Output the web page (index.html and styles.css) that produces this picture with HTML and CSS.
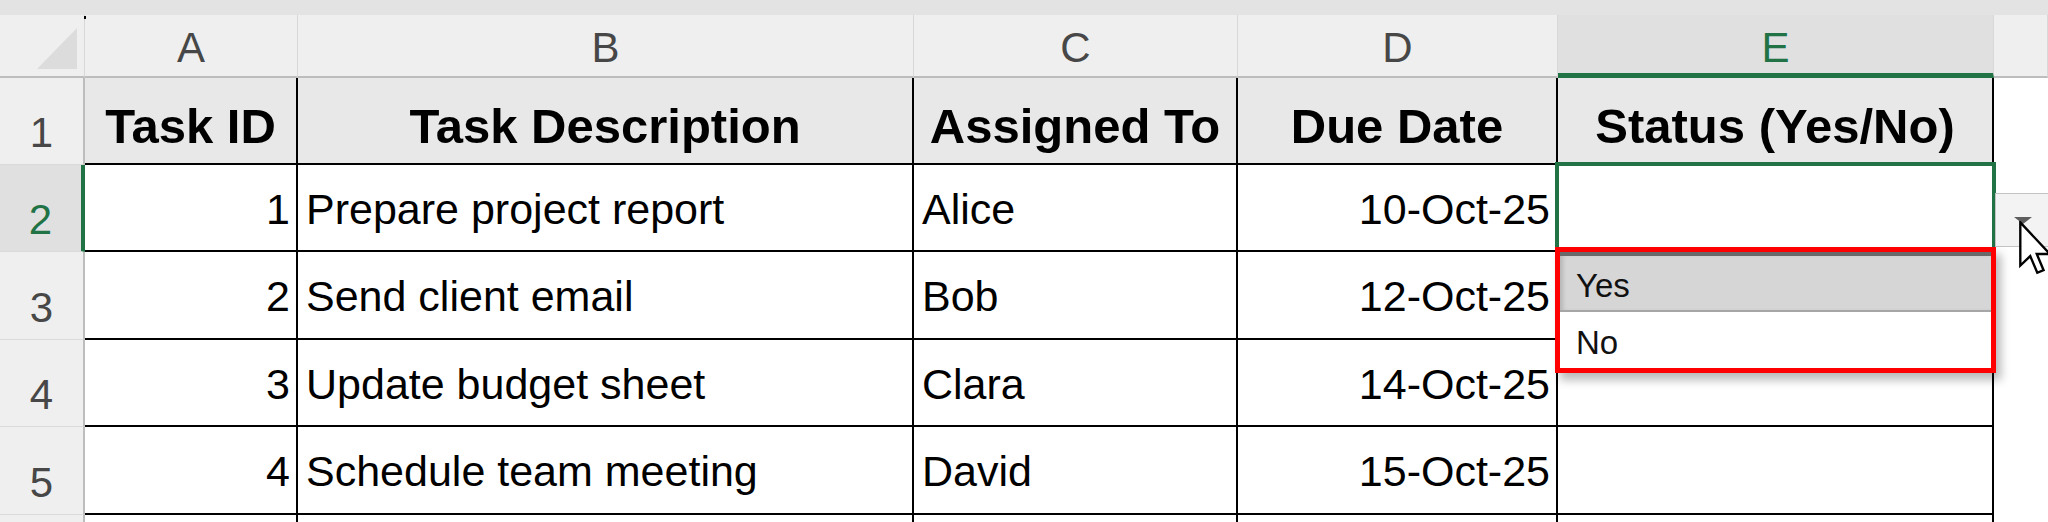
FILE: index.html
```html
<!DOCTYPE html>
<html lang="en">
<head>
  <meta charset="UTF-8" />
  <title>Task Tracker</title>
  <link rel="stylesheet" href="styles.css">
</head>
<body>
  <div class="topbar"></div>

  <div class="sheet">
    <!-- column headers -->
    <div class="corner">
      <svg width="85" height="61" viewBox="0 0 85 61"><polygon points="37,54 77,54 77,13" fill="#dcdcdc"/></svg>
    </div>
    <div class="colhead">A</div>
    <div class="colhead">B</div>
    <div class="colhead">C</div>
    <div class="colhead">D</div>
    <div class="colhead selected">E</div>
    <div class="colhead"></div>

    <!-- row 1 -->
    <div class="rowhead">1</div>
    <div class="cell head">Task ID</div>
    <div class="cell head">Task Description</div>
    <div class="cell head">Assigned To</div>
    <div class="cell head">Due Date</div>
    <div class="cell head">Status (Yes/No)</div>
    <div class="empty"></div>

    <!-- row 2 -->
    <div class="rowhead selected">2</div>
    <div class="cell num">1</div>
    <div class="cell">Prepare project report</div>
    <div class="cell">Alice</div>
    <div class="cell num">10-Oct-25</div>
    <div class="cell active">
      <div class="dd-button"><span class="dd-arrow"></span></div>
      <div class="dd-list">
        <div class="dd-item hover">Yes</div>
        <div class="dd-item">No</div>
      </div>
      <svg class="cursor" width="34" height="55" viewBox="0 0 13 21">
        <path d="M0.5 0.5 L0.5 17 L4.3 13.4 L7 19.8 L9.4 18.8 L6.8 12.6 L11.8 12.6 Z" fill="#fff" stroke="#000" stroke-width="0.9" stroke-linejoin="miter"/>
      </svg>
    </div>
    <div class="empty"></div>

    <!-- row 3 -->
    <div class="rowhead">3</div>
    <div class="cell num">2</div>
    <div class="cell">Send client email</div>
    <div class="cell">Bob</div>
    <div class="cell num">12-Oct-25</div>
    <div class="cell"></div>
    <div class="empty"></div>

    <!-- row 4 -->
    <div class="rowhead">4</div>
    <div class="cell num">3</div>
    <div class="cell">Update budget sheet</div>
    <div class="cell">Clara</div>
    <div class="cell num">14-Oct-25</div>
    <div class="cell"></div>
    <div class="empty"></div>

    <!-- row 5 -->
    <div class="rowhead">5</div>
    <div class="cell num">4</div>
    <div class="cell">Schedule team meeting</div>
    <div class="cell">David</div>
    <div class="cell num">15-Oct-25</div>
    <div class="cell"></div>
    <div class="empty"></div>

    <!-- row 6, only its top edge is visible -->
    <div class="rowhead last"></div>
    <div class="cell last"></div>
    <div class="cell last"></div>
    <div class="cell last"></div>
    <div class="cell last"></div>
    <div class="cell last"></div>
    <div class="empty"></div>
  </div>
</body>
</html>
```

FILE: styles.css
```css
* {
  box-sizing: border-box;
  margin: 0;
  padding: 0;
}

body {
  width: 2048px;
  height: 522px;
  overflow: hidden;
  background-color: #fff;
  font-family: "Liberation Sans", Arial, sans-serif;
  color: #000;
}

.topbar {
  height: 15px;
  background-color: #e3e3e3;
}

.sheet {
  display: grid;
  grid-template-columns: 85px 213px 616px 324px 320px 436px 54px;
  grid-template-rows: 63px 87px 87px 88px 87px 88px 7px;
}

/* headers */
.corner {
  position: relative;
  background-color: #efefef;
  border-bottom: 2px solid #bdbdbd;
  border-right: 1px solid #d8d8d8;
}

.corner svg {
  display: block;
}

.corner::after {
  content: "";
  position: absolute;
  top: 1px;
  right: -2px;
  width: 2px;
  height: 3px;
  background-color: #000;
}

.colhead {
  display: flex;
  justify-content: center;
  align-items: center;
  padding-top: 4px;
  background-color: #efefef;
  border-right: 1px solid #d8d8d8;
  border-bottom: 2px solid #bdbdbd;
  font-size: 42px;
  color: #474747;
}

.colhead.selected {
  background-color: #e0e0e0;
  color: #217346;
  border-bottom: 5px solid #217346;
  padding-top: 7px;
}

.rowhead {
  display: flex;
  justify-content: center;
  align-items: flex-end;
  padding-bottom: 7px;
  background-color: #efefef;
  border-right: 2px solid #bdbdbd;
  border-bottom: 1px solid #dadada;
  font-size: 42px;
  color: #474747;
}

.rowhead.selected {
  background-color: #e0e0e0;
  color: #217346;
  border-right: 4px solid #217346;
}

/* cells */
.cell {
  position: relative;
  display: flex;
  align-items: center;
  padding: 3px 8px 0 8px;
  border-right: 2px solid #000;
  border-bottom: 2px solid #000;
  font-size: 43px;
  white-space: nowrap;
}

.cell.num {
  justify-content: flex-end;
  padding-right: 6px;
}

.cell.head {
  justify-content: center;
  align-items: flex-end;
  padding: 0 0 9px 0;
  background-color: #e8e8e8;
  font-size: 49px;
  font-weight: bold;
}

.rowhead.last,
.cell.last {
  border-bottom: none;
}

.empty {
  background-color: #fff;
}

/* selected cell + data validation list */
.cell.active::before {
  content: "";
  position: absolute;
  top: -3px;
  left: -3px;
  right: -4px;
  bottom: -3px;
  border: 4px solid #217346;
  z-index: 2;
}

.dd-button {
  position: absolute;
  left: 437px;
  top: 28px;
  width: 64px;
  height: 54px;
  background-color: #f3f3f3;
  border: 1px solid #c4c4c4;
  z-index: 3;
}

.dd-arrow {
  position: absolute;
  left: 18px;
  top: 23px;
  width: 0;
  height: 0;
  border-left: 9px solid transparent;
  border-right: 9px solid transparent;
  border-top: 7px solid #5e5e5e;
}

.dd-list {
  position: absolute;
  left: -3px;
  top: 82px;
  width: 441px;
  height: 126px;
  border: 5px solid #ff0000;
  background-color: #fff;
  box-shadow: 5px 7px 9px rgba(0, 0, 0, 0.28);
  z-index: 4;
  font-size: 33px;
  padding-top: 4px;
  background-image: linear-gradient(#6a6a6a, #6a6a6a);
  background-size: 100% 4px;
  background-repeat: no-repeat;
}

.dd-item {
  display: flex;
  align-items: center;
  height: 56px;
  padding: 5px 0 0 16px;
  color: #111;
}

.dd-item.hover {
  background-color: #d6d6d6;
  border-bottom: 2px solid #a6a6a6;
  box-shadow: inset 5px 0 4px -2px rgba(0, 0, 0, 0.15);
}

.cursor {
  position: absolute;
  left: 461px;
  top: 56px;
  z-index: 5;
}
```
